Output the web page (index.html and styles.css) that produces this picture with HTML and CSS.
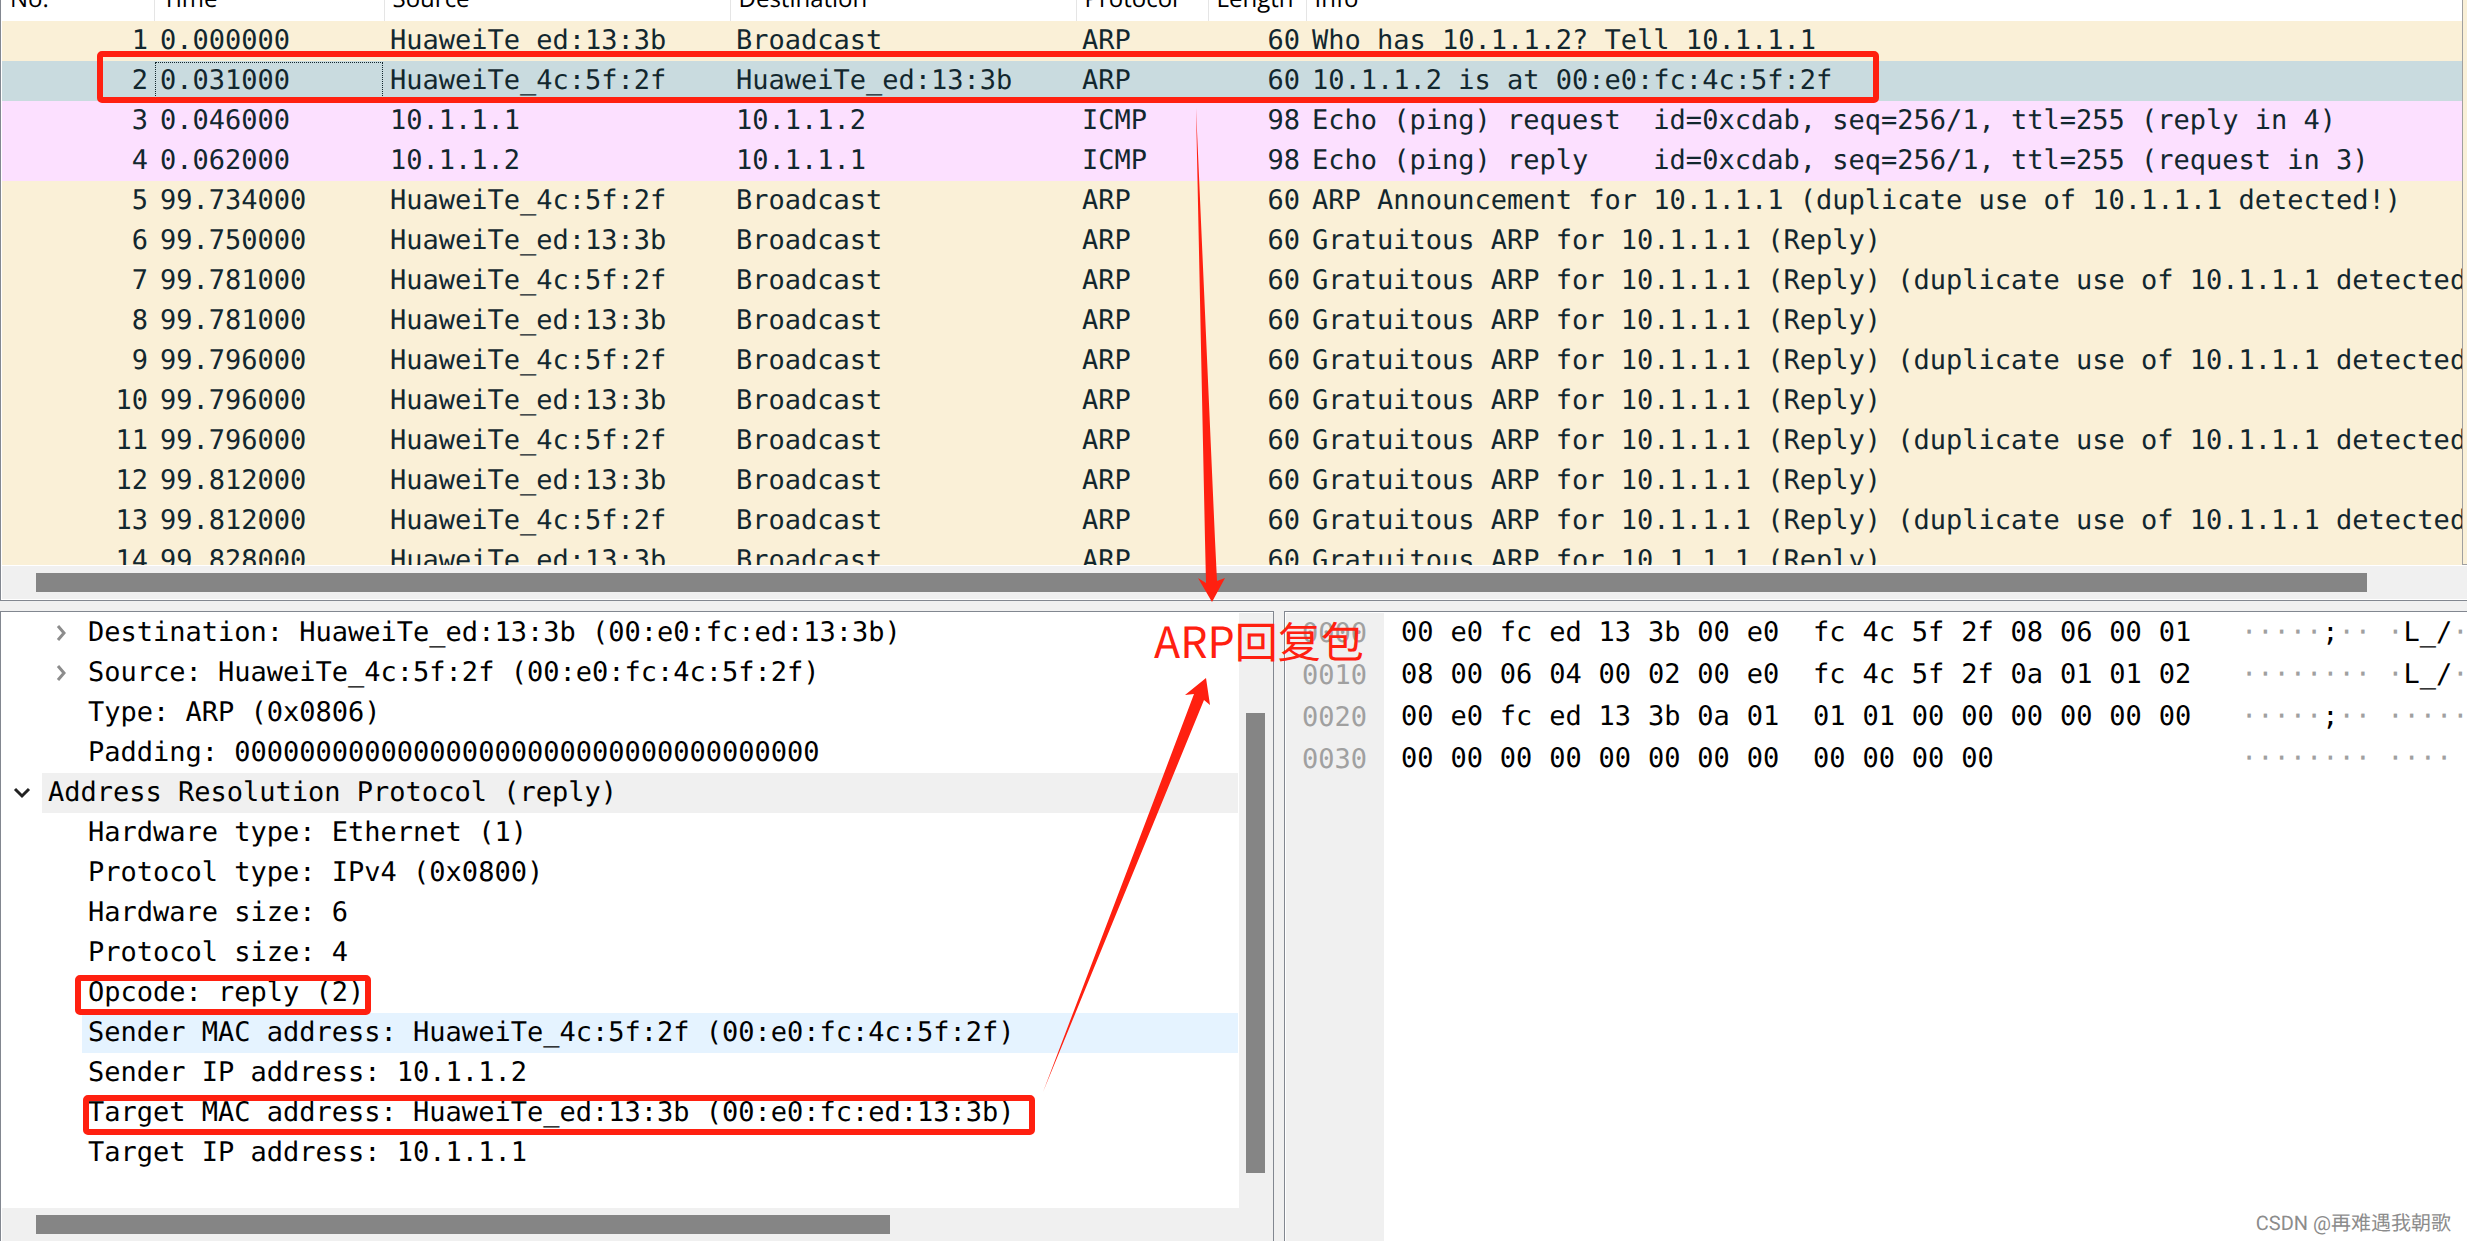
FILE: index.html
```html
<!DOCTYPE html>
<html lang="en">
<head>
<meta charset="utf-8">
<title>Packet capture</title>
<link rel="stylesheet" href="styles.css">
</head>
<body>
<main class="app">
  <section class="packets" aria-label="Packet list">
    <div class="packets-view">
      <div class="packets-scroll">
        <table class="packet-table">
          <colgroup>
            <col class="c-no"><col class="c-time"><col class="c-addr"><col class="c-addr"><col class="c-proto"><col class="c-len"><col>
          </colgroup>
          <thead>
            <tr><th>No.</th><th>Time</th><th>Source</th><th>Destination</th><th>Protocol</th><th>Length</th><th>Info</th></tr>
          </thead>
          <tbody>
            <tr><td>1</td><td>0.000000</td><td>HuaweiTe_ed:13:3b</td><td>Broadcast</td><td>ARP</td><td>60</td><td>Who has 10.1.1.2? Tell 10.1.1.1</td></tr>
            <tr class="selected"><td>2</td><td class="focused">0.031000</td><td>HuaweiTe_4c:5f:2f</td><td>HuaweiTe_ed:13:3b</td><td>ARP</td><td>60</td><td>10.1.1.2 is at 00:e0:fc:4c:5f:2f</td></tr>
            <tr class="icmp"><td>3</td><td>0.046000</td><td>10.1.1.1</td><td>10.1.1.2</td><td>ICMP</td><td>98</td><td>Echo (ping) request  id=0xcdab, seq=256/1, ttl=255 (reply in 4)</td></tr>
            <tr class="icmp"><td>4</td><td>0.062000</td><td>10.1.1.2</td><td>10.1.1.1</td><td>ICMP</td><td>98</td><td>Echo (ping) reply    id=0xcdab, seq=256/1, ttl=255 (request in 3)</td></tr>
            <tr><td>5</td><td>99.734000</td><td>HuaweiTe_4c:5f:2f</td><td>Broadcast</td><td>ARP</td><td>60</td><td>ARP Announcement for 10.1.1.1 (duplicate use of 10.1.1.1 detected!)</td></tr>
            <tr><td>6</td><td>99.750000</td><td>HuaweiTe_ed:13:3b</td><td>Broadcast</td><td>ARP</td><td>60</td><td>Gratuitous ARP for 10.1.1.1 (Reply)</td></tr>
            <tr><td>7</td><td>99.781000</td><td>HuaweiTe_4c:5f:2f</td><td>Broadcast</td><td>ARP</td><td>60</td><td>Gratuitous ARP for 10.1.1.1 (Reply) (duplicate use of 10.1.1.1 detected!)</td></tr>
            <tr><td>8</td><td>99.781000</td><td>HuaweiTe_ed:13:3b</td><td>Broadcast</td><td>ARP</td><td>60</td><td>Gratuitous ARP for 10.1.1.1 (Reply)</td></tr>
            <tr><td>9</td><td>99.796000</td><td>HuaweiTe_4c:5f:2f</td><td>Broadcast</td><td>ARP</td><td>60</td><td>Gratuitous ARP for 10.1.1.1 (Reply) (duplicate use of 10.1.1.1 detected!)</td></tr>
            <tr><td>10</td><td>99.796000</td><td>HuaweiTe_ed:13:3b</td><td>Broadcast</td><td>ARP</td><td>60</td><td>Gratuitous ARP for 10.1.1.1 (Reply)</td></tr>
            <tr><td>11</td><td>99.796000</td><td>HuaweiTe_4c:5f:2f</td><td>Broadcast</td><td>ARP</td><td>60</td><td>Gratuitous ARP for 10.1.1.1 (Reply) (duplicate use of 10.1.1.1 detected!)</td></tr>
            <tr><td>12</td><td>99.812000</td><td>HuaweiTe_ed:13:3b</td><td>Broadcast</td><td>ARP</td><td>60</td><td>Gratuitous ARP for 10.1.1.1 (Reply)</td></tr>
            <tr><td>13</td><td>99.812000</td><td>HuaweiTe_4c:5f:2f</td><td>Broadcast</td><td>ARP</td><td>60</td><td>Gratuitous ARP for 10.1.1.1 (Reply) (duplicate use of 10.1.1.1 detected!)</td></tr>
            <tr><td>14</td><td>99.828000</td><td>HuaweiTe_ed:13:3b</td><td>Broadcast</td><td>ARP</td><td>60</td><td>Gratuitous ARP for 10.1.1.1 (Reply)</td></tr>
          </tbody>
        </table>
      </div>
      <div class="minimap"></div>
    </div>
    <div class="hbar"><div class="thumb" style="width:97.25%"></div></div>
  </section>

  <div class="lower">
    <section class="details" aria-label="Packet details">
      <div class="details-body">
        <ul class="tree">
          <li class="level2"><svg class="chevron closed" viewBox="0 0 12 18"><path d="M2 2l6 7-6 7"/></svg><span>Destination: HuaweiTe_ed:13:3b (00:e0:fc:ed:13:3b)</span></li>
          <li class="level2"><svg class="chevron closed" viewBox="0 0 12 18"><path d="M2 2l6 7-6 7"/></svg><span>Source: HuaweiTe_4c:5f:2f (00:e0:fc:4c:5f:2f)</span></li>
          <li class="level2"><span>Type: ARP (0x0806)</span></li>
          <li class="level2"><span>Padding: 000000000000000000000000000000000000</span></li>
          <li class="level1"><svg class="chevron open" viewBox="0 0 18 12"><path d="M2 2l7 7 7-7"/></svg><span class="section-row">Address Resolution Protocol (reply)</span></li>
          <li class="level2"><span>Hardware type: Ethernet (1)</span></li>
          <li class="level2"><span>Protocol type: IPv4 (0x0800)</span></li>
          <li class="level2"><span>Hardware size: 6</span></li>
          <li class="level2"><span>Protocol size: 4</span></li>
          <li class="level2"><span>Opcode: reply (2)</span></li>
          <li class="level2"><span class="hovered">Sender MAC address: HuaweiTe_4c:5f:2f (00:e0:fc:4c:5f:2f)</span></li>
          <li class="level2"><span>Sender IP address: 10.1.1.2</span></li>
          <li class="level2"><span>Target MAC address: HuaweiTe_ed:13:3b (00:e0:fc:ed:13:3b)</span></li>
          <li class="level2"><span>Target IP address: 10.1.1.1</span></li>
        </ul>
        <div class="vbar"><div class="thumb"></div></div>
      </div>
      <div class="hbar"><div class="thumb" style="width:71%"></div></div>
    </section>

    <section class="bytes" aria-label="Packet bytes">
      <div class="offsets"><p>0000</p><p>0010</p><p>0020</p><p>0030</p></div>
      <div class="hex">
        <p><span>00</span><span>e0</span><span>fc</span><span>ed</span><span>13</span><span>3b</span><span>00</span><span>e0</span></p>
        <p><span>08</span><span>00</span><span>06</span><span>04</span><span>00</span><span>02</span><span>00</span><span>e0</span></p>
        <p><span>00</span><span>e0</span><span>fc</span><span>ed</span><span>13</span><span>3b</span><span>0a</span><span>01</span></p>
        <p><span>00</span><span>00</span><span>00</span><span>00</span><span>00</span><span>00</span><span>00</span><span>00</span></p>
      </div>
      <div class="hex">
        <p><span>fc</span><span>4c</span><span>5f</span><span>2f</span><span>08</span><span>06</span><span>00</span><span>01</span></p>
        <p><span>fc</span><span>4c</span><span>5f</span><span>2f</span><span>0a</span><span>01</span><span>01</span><span>02</span></p>
        <p><span>01</span><span>01</span><span>00</span><span>00</span><span>00</span><span>00</span><span>00</span><span>00</span></p>
        <p><span>00</span><span>00</span><span>00</span><span>00</span></p>
      </div>
      <div class="ascii">
        <p>·····<b>;</b>·· ·<b>L_/</b>·</p>
        <p>········ ·<b>L_/</b>·</p>
        <p>·····<b>;</b>·· ·····</p>
        <p>········ ····</p>
      </div>
    </section>
  </div>

  <div class="notes">
    <div class="frame frame-packet"></div>
    <div class="frame frame-opcode"></div>
    <div class="frame frame-target"></div>
    <svg class="arrows">
      <path d="M1196 108L1215 540L1217 581L1225 578L1212 602L1198 578L1206 583L1205 540Z"/>
      <path d="M1043 1092L1154 800L1194 694L1185 695L1206 678L1210 705L1204 700L1163 800Z"/>
    </svg>
    <p class="note">ARP回复包</p>
  </div>
  <p class="watermark">CSDN @再难遇我朝歌</p>
</main>
</body>
</html>
```

FILE: styles.css
```css
* { box-sizing: border-box; }

body,
p,
ul {
  margin: 0;
  padding: 0;
}

body {
  background: #f0f0f0;
  color: #000;
  font: 27px/40px "DejaVu Sans Mono", monospace;
  text-rendering: geometricPrecision;
}

.app {
  position: relative;
  display: grid;
  grid-template-rows: minmax(0, 601fr) minmax(0, 630fr);
  gap: 10px;
  height: 100vh;
  overflow: hidden;
}

/* Packet list */
.packets {
  display: flex;
  flex-direction: column;
  min-height: 0;
  border-left: 1px solid #828790;
  border-bottom: 1px solid #828790;
  background: #fff;
}

.packets-view {
  display: flex;
  flex: 1;
  min-height: 0;
}

.packets-scroll {
  flex: 1;
  min-width: 0;
  overflow: hidden;
  padding-left: 1px;
}

.packet-table {
  width: 100%;
  margin-top: -19px;
  border-collapse: collapse;
  table-layout: fixed;
  color: #12272e;
}

.c-no { width: 152px; }
.c-time { width: 230px; }
.c-addr { width: 346px; }
.c-proto { width: 132px; }
.c-len { width: 98px; }

.packet-table th {
  height: 40px;
  padding: 0 8px;
  border-right: 1px solid #e5e5e5;
  background: #fff;
  color: #000;
  font: 24px/36px "Open Sans", "Noto Sans", sans-serif;
  text-align: left;
  vertical-align: top;
}

.packet-table th:last-child { border-right: 0; }

.packet-table td {
  height: 40px;
  padding: 0 6px;
  overflow: hidden;
  background: #faf0d7;
  white-space: pre;
}

.packet-table td:nth-child(1),
.packet-table td:nth-child(6) { text-align: right; }

.packet-table .icmp td { background: #fce0ff; }
.packet-table .selected td { background: #c9dbdf; }

.packet-table .focused {
  outline: 1px dotted #12272e;
  outline-offset: -2px;
}

.minimap {
  width: 5px;
  border-left: 1px solid #a0a0a0;
  border-bottom: 1px solid #a0a0a0;
  background: #faf0d7;
}

/* Scroll bars */
.hbar {
  flex: none;
  height: 33px;
  margin: 1px 0 1px 1px;
  padding: 7px 34px;
  background: #f0f0f0;
}

.thumb { background: #858585; }
.hbar .thumb { height: 19px; }

/* Lower panes */
.lower {
  display: grid;
  grid-template-columns: minmax(0, 1274fr) minmax(0, 1183fr);
  gap: 10px;
  min-height: 0;
}

.details {
  display: flex;
  flex-direction: column;
  min-height: 0;
  border: 1px solid #828790;
  border-bottom: 0;
  background: #fff;
}

.details-body {
  display: flex;
  flex: 1;
  min-height: 0;
}

.tree {
  flex: 1;
  min-width: 0;
  padding: 1px 0 0 1px;
  list-style: none;
}

.tree li {
  display: flex;
  align-items: center;
  height: 40px;
}

.tree span {
  flex: 1;
  padding-left: 6px;
  white-space: nowrap;
}

.level1 { padding-left: 40px; }
.level2 { padding-left: 80px; }
.section-row { background: #f0f0f0; }
.hovered { background: #e5f3ff; }

.chevron {
  flex: none;
  fill: none;
  stroke-width: 3;
}

.closed {
  width: 12px;
  height: 18px;
  margin: 0 14px 0 -26px;
  stroke: #8c8c8c;
}

.open {
  width: 18px;
  height: 12px;
  margin: 0 11px 0 -29px;
  stroke: #222;
}

.vbar {
  width: 34px;
  margin: 1px 0 0 1px;
  padding: 100px 8px 35px 7px;
  background: #f0f0f0;
}

.vbar .thumb { height: 100%; }

.details .hbar { margin: 0 0 0 1px; }

/* Packet bytes */
.bytes {
  display: flex;
  gap: 17px;
  min-height: 0;
  overflow: hidden;
  border-top: 1px solid #828790;
  border-left: 1px solid #828790;
  background: #fff;
  line-height: 42px;
}

.offsets {
  flex: none;
  width: 98px;
  margin: 1px 0 0 1px;
  padding-left: 16px;
  background: #f0f0f0;
  color: #a0a0a0;
}

.hex {
  flex: none;
  width: 395px;
}

.hex p {
  display: grid;
  grid-template-columns: repeat(8, 1fr);
}

.ascii {
  margin-left: 16px;
  color: #a0a0a0;
  white-space: nowrap;
}

.ascii b {
  color: #000;
  font-weight: normal;
}

/* Annotations drawn over the capture */
.notes {
  position: absolute;
  inset: 0;
  color: #ff2010;
  pointer-events: none;
}

.frame {
  position: absolute;
  border: 6px solid;
  border-radius: 5px;
}

.frame-packet { left: 97px; top: 51px; width: 1782px; height: 52px; }
.frame-opcode { left: 75px; top: 975px; width: 296px; height: 40px; }
.frame-target { left: 83px; top: 1095px; width: 952px; height: 40px; }

.arrows {
  width: 100%;
  height: 100%;
  fill: currentColor;
}

.note {
  position: absolute;
  left: 1154px;
  top: 610px;
  font: 43px/60px "Noto Sans CJK SC", sans-serif;
}

.watermark {
  position: absolute;
  right: 16px;
  bottom: 3px;
  color: #8c8c8c;
  font: 20px/30px Roboto, "Noto Sans CJK SC", sans-serif;
}
```
